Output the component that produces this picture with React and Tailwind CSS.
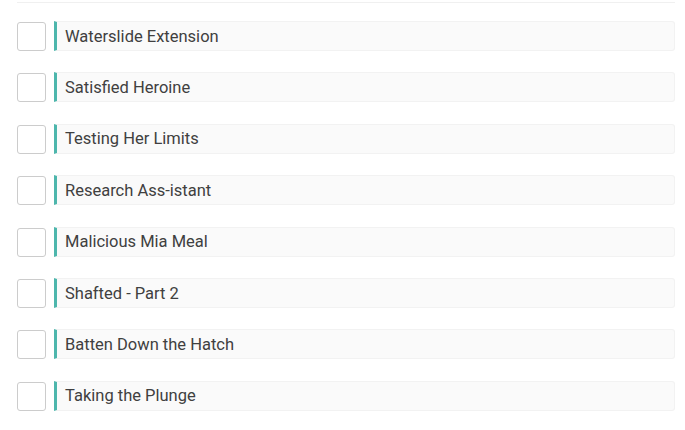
import React from 'react'

const episodes = [
  'Waterslide Extension',
  'Satisfied Heroine',
  'Testing Her Limits',
  'Research Ass-istant',
  'Malicious Mia Meal',
  'Shafted - Part 2',
  'Batten Down the Hatch',
  'Taking the Plunge',
]

const App = () => {
  return (
    <div className="w-[685px] h-[430px] bg-white pl-[17px] pr-[10px] pt-[2px] font-['Roboto',sans-serif] overflow-hidden">
      {/* leftover border of the previous list */}
      <div className="h-px bg-[#f0f0f0] mb-[18px]" />

      <ul className="flex flex-col gap-[21.4px]">
        {episodes.map((title) => (
          <li key={title} className="flex items-center gap-[8px] h-[30px]">
            <div className="w-[29px] h-[29px] shrink-0 rounded-[3px] border border-[#cccccc] bg-white mt-[1px]" />
            <div className="flex-1 h-[30px] flex items-center bg-[#fafafa] border border-l-0 border-[#f2f2f2] rounded-r-[3px] border-l-[3px] border-l-[#4db6ac] pl-[8px] pt-[2px] text-[16.5px] text-[#404040]">
              {title}
            </div>
          </li>
        ))}
      </ul>
    </div>
  )
}

export default App
